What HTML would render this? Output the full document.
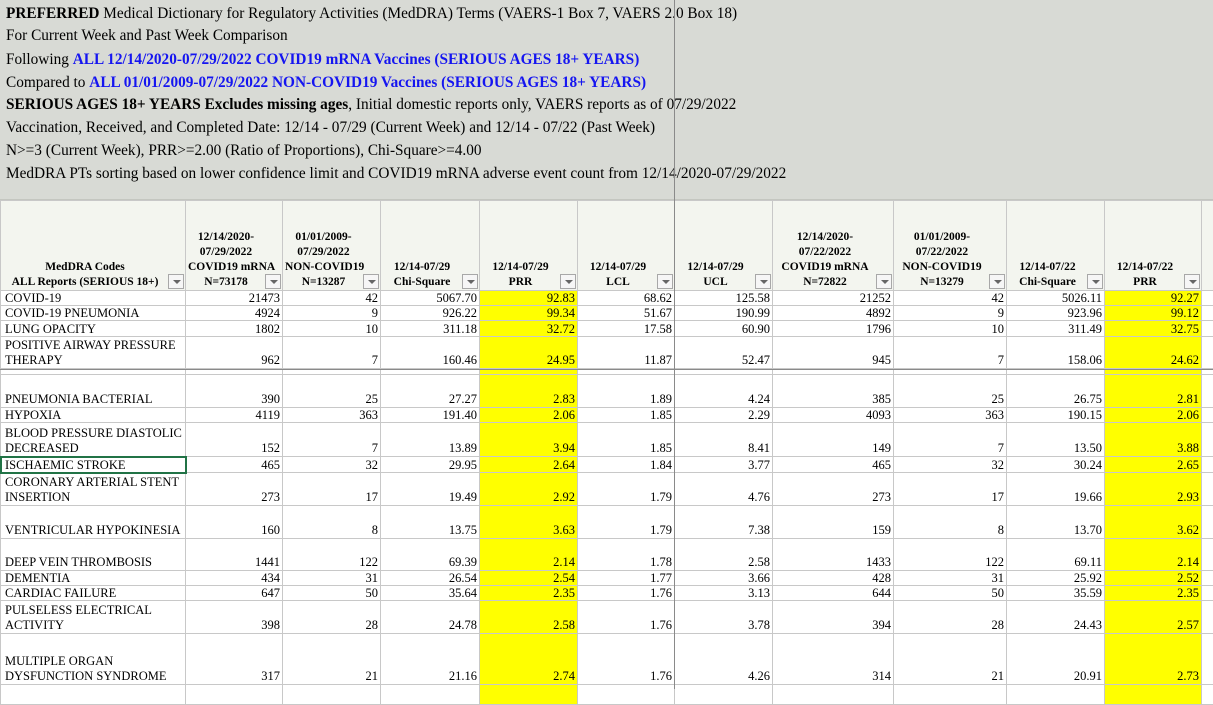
<!DOCTYPE html>
<html><head><meta charset="utf-8"><style>
*{box-sizing:border-box;margin:0;padding:0}
body{width:1213px;height:689px;overflow:hidden;background:#fff;font-family:"Liberation Serif",serif;position:relative}
#top{position:absolute;left:0;top:0;width:1213px;height:200px;background:#d8dad5;border-bottom:1px solid #c4c6c0}
#top div{position:absolute;left:6px;font-size:15.3px;color:#000;white-space:nowrap;line-height:18px}
.b{color:#1515f0;font-weight:bold}
table{position:absolute;left:0;top:200px;border-collapse:collapse;table-layout:fixed;width:1213px}
td{border:1px solid #c8c8c8;font-size:12.5px;line-height:13px;vertical-align:bottom;text-align:right;padding:0 2px 0 2px;white-space:nowrap;overflow:hidden}
td.n{text-align:left;padding-left:4px;white-space:normal}
tr.t td{line-height:15px}
tr.e td{font-size:0;line-height:0}
td.y{background:#ffff00}
tr.h td{background:#f3f5ef;font-weight:bold;font-size:11.5px;line-height:15px;text-align:center;position:relative;padding:0 18px 0 2px}
tr.h td.f{padding-right:2px}
.dd{position:absolute;right:1px;bottom:1px;width:16px;height:15px;border:1px solid #a8a8a8;background:#f6f6f6}
.dd:after{content:"";position:absolute;left:4px;top:5px;border-left:4px solid transparent;border-right:4px solid transparent;border-top:4px solid #666}
</style></head><body>
<div id="top">
<div style="top:5px"><b>PREFERRED</b> Medical Dictionary for Regulatory Activities (MedDRA) Terms (VAERS-1 Box 7, VAERS 2.0 Box 18)</div>
<div style="top:27px">For Current Week and Past Week Comparison</div>
<div style="top:51px">Following <span class="b">ALL 12/14/2020-07/29/2022 COVID19 mRNA Vaccines (SERIOUS AGES 18+ YEARS)</span></div>
<div style="top:74px">Compared to <span class="b">ALL 01/01/2009-07/29/2022 NON-COVID19 Vaccines (SERIOUS AGES 18+ YEARS)</span></div>
<div style="top:96px"><b>SERIOUS AGES 18+ YEARS Excludes missing ages</b>, Initial domestic reports only, VAERS reports as of 07/29/2022</div>
<div style="top:119px">Vaccination, Received, and Completed Date: 12/14 - 07/29 (Current Week) and 12/14 - 07/22 (Past Week)</div>
<div style="top:142px">N&gt;=3 (Current Week), PRR&gt;=2.00 (Ratio of Proportions), Chi-Square&gt;=4.00</div>
<div style="top:165px">MedDRA PTs sorting based on lower confidence limit and COVID19 mRNA adverse event count from 12/14/2020-07/29/2022</div>
</div>
<table>
<colgroup><col style="width:185px"><col style="width:97px"><col style="width:98px"><col style="width:99px"><col style="width:98px"><col style="width:97px"><col style="width:98px"><col style="width:121px"><col style="width:113px"><col style="width:98px"><col style="width:97px"><col style="width:12px"></colgroup>
<tr class="h" style="height:90px">
<td>MedDRA Codes<br>ALL Reports (SERIOUS 18+)<span class="dd"></span></td>
<td>12/14/2020-<br>07/29/2022<br>COVID19 mRNA<br>N=73178<span class="dd"></span></td>
<td>01/01/2009-<br>07/29/2022<br>NON-COVID19<br>N=13287<span class="dd"></span></td>
<td>12/14-07/29<br>Chi-Square<span class="dd"></span></td>
<td>12/14-07/29<br>PRR<span class="dd"></span></td>
<td>12/14-07/29<br>LCL<span class="dd"></span></td>
<td>12/14-07/29<br>UCL<span class="dd"></span></td>
<td>12/14/2020-<br>07/22/2022<br>COVID19 mRNA<br>N=72822<span class="dd"></span></td>
<td>01/01/2009-<br>07/22/2022<br>NON-COVID19<br>N=13279<span class="dd"></span></td>
<td>12/14-07/22<br>Chi-Square<span class="dd"></span></td>
<td>12/14-07/22<br>PRR<span class="dd"></span></td>
<td class="f"></td>
</tr>
<tr style="height:15px"><td class="n">COVID-19</td><td>21473</td><td>42</td><td>5067.70</td><td class="y">92.83</td><td>68.62</td><td>125.58</td><td>21252</td><td>42</td><td>5026.11</td><td class="y">92.27</td><td></td></tr>
<tr style="height:15px"><td class="n">COVID-19 PNEUMONIA</td><td>4924</td><td>9</td><td>926.22</td><td class="y">99.34</td><td>51.67</td><td>190.99</td><td>4892</td><td>9</td><td>923.96</td><td class="y">99.12</td><td></td></tr>
<tr style="height:16px"><td class="n">LUNG OPACITY</td><td>1802</td><td>10</td><td>311.18</td><td class="y">32.72</td><td>17.58</td><td>60.90</td><td>1796</td><td>10</td><td>311.49</td><td class="y">32.75</td><td></td></tr>
<tr class="t" style="height:32px"><td class="n">POSITIVE AIRWAY PRESSURE THERAPY</td><td>962</td><td>7</td><td>160.46</td><td class="y">24.95</td><td>11.87</td><td>52.47</td><td>945</td><td>7</td><td>158.06</td><td class="y">24.62</td><td></td></tr>
<tr class="e" style="height:6px"><td></td><td></td><td></td><td></td><td class="y"></td><td></td><td></td><td></td><td></td><td></td><td class="y"></td><td></td></tr>
<tr class="t" style="height:33px"><td class="n">PNEUMONIA BACTERIAL</td><td>390</td><td>25</td><td>27.27</td><td class="y">2.83</td><td>1.89</td><td>4.24</td><td>385</td><td>25</td><td>26.75</td><td class="y">2.81</td><td></td></tr>
<tr style="height:15px"><td class="n">HYPOXIA</td><td>4119</td><td>363</td><td>191.40</td><td class="y">2.06</td><td>1.85</td><td>2.29</td><td>4093</td><td>363</td><td>190.15</td><td class="y">2.06</td><td></td></tr>
<tr class="t" style="height:34px"><td class="n">BLOOD PRESSURE DIASTOLIC DECREASED</td><td>152</td><td>7</td><td>13.89</td><td class="y">3.94</td><td>1.85</td><td>8.41</td><td>149</td><td>7</td><td>13.50</td><td class="y">3.88</td><td></td></tr>
<tr style="height:16px"><td class="n" style="outline:2px solid #217346;outline-offset:-1px">ISCHAEMIC STROKE</td><td>465</td><td>32</td><td>29.95</td><td class="y">2.64</td><td>1.84</td><td>3.77</td><td>465</td><td>32</td><td>30.24</td><td class="y">2.65</td><td></td></tr>
<tr class="t" style="height:33px"><td class="n">CORONARY ARTERIAL STENT INSERTION</td><td>273</td><td>17</td><td>19.49</td><td class="y">2.92</td><td>1.79</td><td>4.76</td><td>273</td><td>17</td><td>19.66</td><td class="y">2.93</td><td></td></tr>
<tr class="t" style="height:33px"><td class="n">VENTRICULAR HYPOKINESIA</td><td>160</td><td>8</td><td>13.75</td><td class="y">3.63</td><td>1.79</td><td>7.38</td><td>159</td><td>8</td><td>13.70</td><td class="y">3.62</td><td></td></tr>
<tr class="t" style="height:32px"><td class="n">DEEP VEIN THROMBOSIS</td><td>1441</td><td>122</td><td>69.39</td><td class="y">2.14</td><td>1.78</td><td>2.58</td><td>1433</td><td>122</td><td>69.11</td><td class="y">2.14</td><td></td></tr>
<tr style="height:15px"><td class="n">DEMENTIA</td><td>434</td><td>31</td><td>26.54</td><td class="y">2.54</td><td>1.77</td><td>3.66</td><td>428</td><td>31</td><td>25.92</td><td class="y">2.52</td><td></td></tr>
<tr style="height:15px"><td class="n">CARDIAC FAILURE</td><td>647</td><td>50</td><td>35.64</td><td class="y">2.35</td><td>1.76</td><td>3.13</td><td>644</td><td>50</td><td>35.59</td><td class="y">2.35</td><td></td></tr>
<tr class="t" style="height:33px"><td class="n">PULSELESS ELECTRICAL ACTIVITY</td><td>398</td><td>28</td><td>24.78</td><td class="y">2.58</td><td>1.76</td><td>3.78</td><td>394</td><td>28</td><td>24.43</td><td class="y">2.57</td><td></td></tr>
<tr class="t" style="height:51px"><td class="n">MULTIPLE ORGAN DYSFUNCTION SYNDROME</td><td>317</td><td>21</td><td>21.16</td><td class="y">2.74</td><td>1.76</td><td>4.26</td><td>314</td><td>21</td><td>20.91</td><td class="y">2.73</td><td></td></tr>
<tr class="e" style="height:20px"><td></td><td></td><td></td><td></td><td class="y"></td><td></td><td></td><td></td><td></td><td></td><td class="y"></td><td></td></tr>
</table>
<div style="position:absolute;left:674px;top:0;width:1px;height:689px;background:#8a8a8a"></div>
<div style="position:absolute;left:0;top:369px;width:1213px;height:1px;background:#8a8a8a"></div>
</body></html>
